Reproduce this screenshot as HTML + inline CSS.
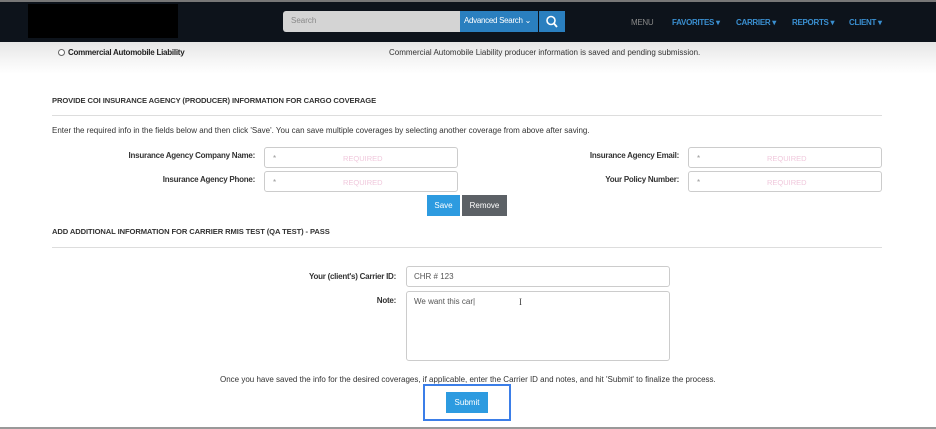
<!DOCTYPE html>
<html><head><meta charset="utf-8"><style>
*{margin:0;padding:0;box-sizing:border-box}
body{width:936px;height:429px;overflow:hidden;background:#fff;font-family:"Liberation Sans",sans-serif;position:relative;color:#333}
.a{position:absolute;white-space:nowrap}
.nav{left:0;top:0;width:936px;height:42px;background:#0d131b;border-top:2px solid #777}
.inp{background:#fff;border:1px solid #ccc;border-radius:3px}
.lbl{font-size:8px;font-weight:bold;color:#333;text-align:right;letter-spacing:-0.25px}
.req{font-size:7.5px;color:#f0c8dc}
.star{font-size:8px;color:#999}
.hr{height:1px;background:#ddd}
.h{font-size:7.6px;font-weight:bold;color:#333;letter-spacing:-0.1px}
.n{font-size:8px;color:#3a8fd0;font-weight:bold;letter-spacing:-0.3px;top:18px}
</style></head><body>
<div class="a nav"></div>
<div class="a" style="left:28px;top:4px;width:150px;height:34px;background:#000"></div>
<div class="a" style="left:283px;top:11px;width:177px;height:21px;background:#d4d4d4;border-radius:3px 0 0 3px;font-size:8px;color:#888;padding:5px 8px">Search</div>
<div class="a" style="left:460px;top:11px;width:78px;height:21px;background:#2a7fbf;color:#fff;font-size:8px;padding:5px 4px;letter-spacing:-0.3px">Advanced Search &#8964;</div>
<div class="a" style="left:539px;top:11px;width:26px;height:21px;background:#2a7fbf;"><svg width="26" height="21"><circle cx="12" cy="9.5" r="4" fill="none" stroke="#fff" stroke-width="1.6"/><line x1="15" y1="12.5" x2="18" y2="16" stroke="#fff" stroke-width="1.8"/></svg></div>
<div class="a" style="left:631px;top:18px;font-size:8px;color:#888;letter-spacing:-0.3px">MENU</div>
<div class="a n" style="left:672px">FAVORITES ▾</div>
<div class="a n" style="left:736px">CARRIER ▾</div>
<div class="a n" style="left:792px">REPORTS ▾</div>
<div class="a n" style="left:849px">CLIENT ▾</div>
<div class="a" style="left:0;top:42px;width:936px;height:32px;background:linear-gradient(#e6e6e6,#f6f6f6 60%,#fff)"></div>
<div class="a" style="left:58px;top:49px;width:7px;height:7px;border:1px solid #666;border-radius:50%;background:#fff"></div>
<div class="a" style="left:68px;top:48px;font-size:8px;font-weight:bold;color:#222;letter-spacing:-0.25px">Commercial Automobile Liability</div>
<div class="a" style="left:389px;top:48px;font-size:8px;color:#333">Commercial Automobile Liability producer information is saved and pending submission.</div>
<div class="a h" style="left:52px;top:96px">PROVIDE COI INSURANCE AGENCY (PRODUCER) INFORMATION FOR CARGO COVERAGE</div>
<div class="a hr" style="left:52px;top:115px;width:830px"></div>
<div class="a" style="left:52px;top:126px;font-size:8px;color:#333">Enter the required info in the fields below and then click 'Save'. You can save multiple coverages by selecting another coverage from above after saving.</div>
<div class="a lbl" style="left:100px;top:151px;width:155px">Insurance Agency Company Name:</div>
<div class="a lbl" style="left:100px;top:175px;width:155px">Insurance Agency Phone:</div>
<div class="a lbl" style="left:520px;top:151px;width:159px">Insurance Agency Email:</div>
<div class="a lbl" style="left:520px;top:175px;width:159px">Your Policy Number:</div>
<div class="a inp" style="left:264px;top:147px;width:194px;height:21px"><span class="a star" style="left:8px;top:6px">*</span><span class="a req" style="left:78px;top:6px">REQUIRED</span></div>
<div class="a inp" style="left:264px;top:171px;width:194px;height:21px"><span class="a star" style="left:8px;top:6px">*</span><span class="a req" style="left:78px;top:6px">REQUIRED</span></div>
<div class="a inp" style="left:688px;top:147px;width:194px;height:21px"><span class="a star" style="left:8px;top:6px">*</span><span class="a req" style="left:78px;top:6px">REQUIRED</span></div>
<div class="a inp" style="left:688px;top:171px;width:194px;height:21px"><span class="a star" style="left:8px;top:6px">*</span><span class="a req" style="left:78px;top:6px">REQUIRED</span></div>
<div class="a" style="left:427px;top:195px;width:33px;height:21px;background:#2d9be0;color:#fff;font-size:8px;text-align:center;line-height:21px">Save</div>
<div class="a" style="left:462px;top:195px;width:45px;height:21px;background:#5c6166;color:#fff;font-size:8px;text-align:center;line-height:21px">Remove</div>
<div class="a h" style="left:52px;top:227px">ADD ADDITIONAL INFORMATION FOR CARRIER RMIS TEST (QA TEST) - PASS</div>
<div class="a hr" style="left:52px;top:247px;width:830px"></div>
<div class="a lbl" style="left:250px;top:272px;width:146px">Your (client's) Carrier ID:</div>
<div class="a lbl" style="left:250px;top:296px;width:146px">Note:</div>
<div class="a inp" style="left:406px;top:266px;width:264px;height:21px;font-size:8px;color:#555;padding:5px 7px">CHR # 123</div>
<div class="a inp" style="left:406px;top:291px;width:264px;height:70px;font-size:8px;color:#555;padding:5px 7px">We want this car|</div>
<div class="a" style="left:519px;top:297px;font-size:9px;color:#444;font-family:'Liberation Serif',serif">I</div>
<div class="a" style="left:220px;top:375px;font-size:8px;color:#333">Once you have saved the info for the desired coverages, if applicable, enter the Carrier ID and notes, and hit 'Submit' to finalize the process.</div>
<div class="a" style="left:423px;top:384px;width:88px;height:37px;border:2px solid #3b7ee8"></div>
<div class="a" style="left:446px;top:392px;width:42px;height:21px;background:#2d9be0;color:#fff;font-size:8px;text-align:center;line-height:21px">Submit</div>
<div class="a" style="left:0;top:427px;width:936px;height:2px;background:#999"></div>
</body></html>
